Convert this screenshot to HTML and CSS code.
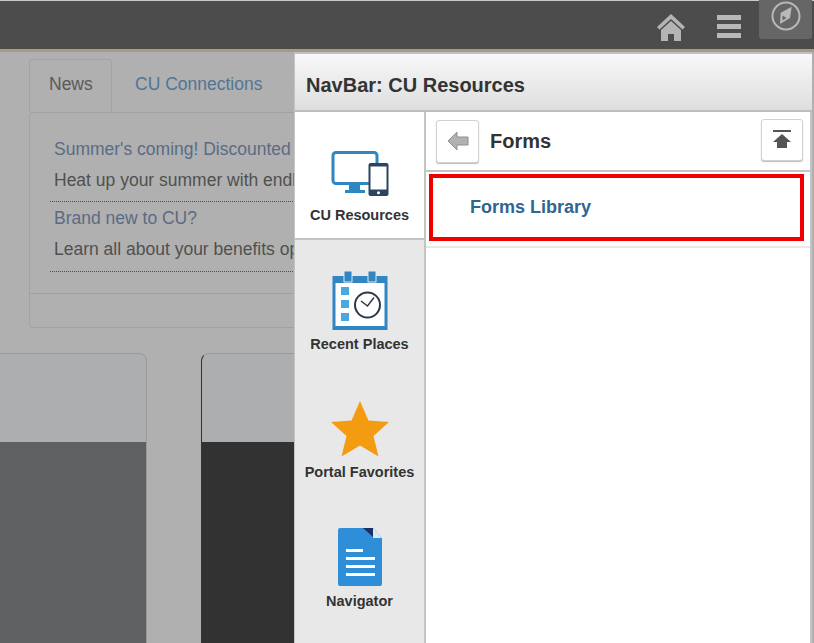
FILE: index.html
```html
<!DOCTYPE html>
<html lang="en">
<head>
    <meta charset="UTF-8">
    <title>NavBar: CU Resources</title>
    <link rel="stylesheet" href="styles.css">
</head>
<body>
    <div class="page">
        <div class="topbar">
            <svg class="home-icon" width="30" height="30" viewBox="0 0 30 30">
                <path d="M1 14 15 1l14 13-2.500 2.500L15 6 3.500 16.500z" fill="#b4b4b4"/>
                <path d="M5 17 15 8l10 9v11h-7v-7h-6v7H5z" fill="#b4b4b4"/>
            </svg>
            <div class="burger"><span></span><span></span><span></span></div>
            <div class="compass-tab">
                <svg width="30" height="30" viewBox="0 0 30 30">
                    <circle cx="15" cy="15" r="13.500" fill="none" stroke="#b8b8b8" stroke-width="2"/>
                    <path d="M20.700 5.700 19 17 9 23 9.700 11.700z" fill="#b8b8b8"/>
                    <path d="M11.500 14.500 15.500 17 11.500 19.500z" fill="#666"/>
                </svg>
            </div>
        </div>

        <div class="content">
            <div class="tabs">
                <div class="tab active">News</div>
                <div class="tab link">CU Connections</div>
            </div>
            <div class="news-box">
                <div class="news-list">
                    <div class="news-item">
                        <div class="news-title">Summer's coming! Discounted</div>
                        <div class="news-text">Heat up your summer with endl</div>
                    </div>
                    <div class="news-item">
                        <div class="news-title">Brand new to CU?</div>
                        <div class="news-text">Learn all about your benefits op</div>
                    </div>
                </div>
                <div class="news-footer"></div>
            </div>
            <div class="tiles">
                <div class="tile tile-left"><div class="tile-top"></div><div class="tile-body"></div></div>
                <div class="tile tile-right"><div class="tile-top"></div><div class="tile-body"></div></div>
            </div>
        </div>

        <div class="navbar">
            <div class="navbar-title">NavBar: CU Resources</div>
            <div class="navbar-main">
                <div class="side">
                    <div class="side-item current">
                        <svg width="58" height="46" viewBox="0 0 58 46">
                            <rect x="2" y="1.500" width="44" height="31" rx="3" fill="none" stroke="#2f86c1" stroke-width="3"/>
                            <path d="M18 33h11v6h5v3H14v-3h4z" fill="#2f86c1"/>
                            <rect x="37.500" y="12" width="20" height="33" rx="2" fill="#2c4461"/>
                            <rect x="39.500" y="15.500" width="16" height="23" fill="#fff"/>
                            <circle cx="47.500" cy="41.700" r="1.500" fill="#fff"/>
                        </svg>
                        <div class="side-label">CU Resources</div>
                    </div>
                    <div class="side-item">
                        <svg width="56" height="60" viewBox="0 0 56 60">
                            <rect x="0.500" y="6" width="55" height="54" fill="#2f86c1"/>
                            <rect x="3.500" y="13" width="49" height="43" fill="#fff"/>
                            <rect x="12" y="1" width="8" height="11" fill="#2f86c1" stroke="#e8e8e8"/>
                            <rect x="36" y="1" width="8" height="11" fill="#2f86c1" stroke="#e8e8e8"/>
                            <rect x="9" y="17" width="8" height="8" fill="#4aa8e0"/>
                            <rect x="9" y="30" width="8" height="8" fill="#4aa8e0"/>
                            <rect x="9" y="43" width="8" height="8" fill="#4aa8e0"/>
                            <circle cx="35.500" cy="35" r="12.500" fill="none" stroke="#2b3a4a" stroke-width="2"/>
                            <path d="M29 31l6.500 5L42 27.500" fill="none" stroke="#2b3a4a" stroke-width="1.500"/>
                        </svg>
                        <div class="side-label">Recent Places</div>
                    </div>
                    <div class="side-item">
                        <svg width="60" height="57" viewBox="0 0 60 57">
                            <path d="M30 1l8.500 19.500L59 22 43.500 36l5 20.500L30 45.500 11.500 56.500l5-20.500L1 22l20.500-1.500z" fill="#f39c12"/>
                        </svg>
                        <div class="side-label">Portal Favorites</div>
                    </div>
                    <div class="side-item">
                        <svg width="46" height="60" viewBox="0 0 46 60">
                            <path d="M3 1h33l9 10v46a2 2 0 0 1-2 2H3a2 2 0 0 1-2-2V3a2 2 0 0 1 2-2z" fill="#2f8ed8"/>
                            <path d="M26 1h10v9z" fill="#1c2f66"/>
                            <path d="M36 1l9 10h-9z" fill="#dce8f2"/>
                            <rect x="9" y="22" width="17" height="3" fill="#fff"/>
                            <rect x="9" y="30" width="29" height="3" fill="#fff"/>
                            <rect x="9" y="38" width="29" height="3" fill="#fff"/>
                            <rect x="9" y="46" width="29" height="3" fill="#fff"/>
                        </svg>
                        <div class="side-label">Navigator</div>
                    </div>
                </div>
                <div class="detail">
                    <div class="detail-head">
                        <div class="btn">
                            <svg width="22" height="20" viewBox="0 0 22 20">
                                <path d="M1 10 10 1v5h11v8H10v5z" fill="#b2b2b2" stroke="#8f8f8f"/>
                            </svg>
                        </div>
                        <div class="detail-title">Forms</div>
                        <div class="btn btn-top">
                            <svg width="18" height="20" viewBox="0 0 18 20">
                                <rect x="0" y="0" width="18" height="2" fill="#555"/>
                                <path d="M9 4 18 12H14v6H4V12H0z" fill="#555"/>
                            </svg>
                        </div>
                    </div>
                    <div class="detail-row">
                        <div class="selected-link">Forms Library</div>
                    </div>
                </div>
            </div>
        </div>
    </div>
</body>
</html>
```

FILE: styles.css
```css
* {
    box-sizing: border-box;
}
body {
    margin: 0;
    font-family: "Liberation Sans", Arial, sans-serif;
    background-color: #b0b0b0;
}
.page {
    position: relative;
    width: 814px;
    height: 643px;
    overflow: hidden;
    background-color: #b0b0b0;
}

/* top bar */
.topbar {
    position: relative;
    display: flex;
    align-items: center;
    justify-content: flex-end;
    height: 52px;
    padding: 5px 73px 0 0;
    background-color: #4c4c4c;
    border-top: 1px solid #c8c8c8;
    border-bottom: 3px solid #a49d85;
}
.home-icon {
    margin-right: 31px;
}
.burger {
    display: flex;
    flex-direction: column;
    gap: 4px;
    width: 24px;
    margin-top: -2px;
}
.burger span {
    height: 5px;
    background-color: #b8b8b8;
}
.compass-tab {
    position: absolute;
    top: -1px;
    right: 2px;
    width: 53px;
    height: 39px;
    display: flex;
    justify-content: center;
    padding-top: 1px;
    background-color: #666;
    border-radius: 0 0 3px 3px;
}

/* page behind the overlay */
.content {
    padding: 7px 0 0 29px;
}
.tabs {
    display: flex;
    height: 53px;
}
.tab {
    padding: 15px 0 0 19px;
    font-size: 17.500px;
}
.tab.active {
    width: 83px;
    padding-top: 14px;
    color: #5a5a5a;
    border: 1px solid #a2a2a2;
    border-bottom: none;
    border-radius: 4px 4px 0 0;
}
.tab.link {
    padding-left: 23px;
    color: #527595;
}
.news-box {
    width: 266px;
    height: 216px;
    overflow: hidden;
    border: 1px solid #a2a2a2;
    border-right: none;
    border-radius: 4px 0 0 4px;
}
.news-list {
    height: 181px;
    padding: 26px 0 0 20px;
    border-bottom: 1px solid #a0a0a0;
}
.news-item {
    padding-left: 4px;
    border-bottom: 1px dotted #4c4c4c;
    white-space: nowrap;
}
.news-item + .news-item {
    padding-top: 6px;
    padding-bottom: 1px;
}
.news-title,
.news-text {
    height: 31px;
    line-height: 20px;
    font-size: 17.500px;
}
.news-title {
    color: #5b6b85;
}
.news-text {
    color: #505050;
}
.tiles {
    display: flex;
    gap: 54px;
    margin: 25px 0 0 -29px;
}
.tile {
    height: 290px;
    width: 147px;
    overflow: hidden;
    background-color: #adaeb0;
    border-top: 1px solid #9a9a9a;
}
.tile-top {
    height: 88px;
}
.tile-body {
    height: 201px;
}
.tile-left {
    border-right: 1px solid #999;
    border-radius: 0 8px 0 0;
}
.tile-left .tile-body {
    background-color: #5f6062;
}
.tile-right {
    width: 94px;
    border-left: 1px solid #333;
    border-radius: 8px 0 0 0;
}
.tile-right .tile-body {
    background-color: #323232;
}

/* navbar overlay */
.navbar {
    position: absolute;
    top: 52px;
    left: 294px;
    right: 2px;
    bottom: 0;
    display: flex;
    flex-direction: column;
    background-color: #fff;
    border-top: 2px solid #bfbfbf;
    border-left: 1px solid #c4c4c4;
}
.navbar-title {
    height: 58px;
    padding: 20px 0 0 11px;
    font-size: 20px;
    font-weight: bold;
    color: #333;
    background: linear-gradient(#f8f8f8, #dedede);
    border-bottom: 2px solid #bdbdbd;
}
.navbar-main {
    flex: 1;
    display: flex;
}
.side {
    width: 131px;
    background-color: #e8e8e8;
    border-right: 2px solid #c4c4c4;
}
.side-item {
    display: flex;
    flex-direction: column;
    align-items: center;
    height: 127px;
    padding-top: 30px;
    gap: 6px;
}
.side-item.current {
    height: 128px;
    padding-top: 39px;
    gap: 10px;
    background-color: #fff;
    border-bottom: 2px solid #c4c4c4;
}
.side-item:nth-child(2) {
    height: 130px;
}
.side-item:nth-child(3) {
    gap: 7px;
}
.side-label {
    font-size: 14.500px;
    font-weight: bold;
    color: #333;
    white-space: nowrap;
}
.detail {
    flex: 1;
    border-right: 2px solid #c4c4c4;
}
.detail-head {
    display: flex;
    align-items: center;
    gap: 11px;
    height: 60px;
    padding: 0 7px 0 10px;
    border-bottom: 2px solid #c4c4c4;
}
.btn {
    display: flex;
    align-items: center;
    justify-content: center;
    width: 43px;
    height: 43px;
    background-color: #fff;
    border: 1px solid #d2d2d2;
    border-radius: 3px;
    box-shadow: 0 1px 1px #bbb;
}
.btn-top {
    width: 42px;
    height: 42px;
    margin-left: auto;
    margin-bottom: 2px;
}
.detail-title {
    font-size: 20px;
    font-weight: bold;
    color: #333;
}
.detail-row {
    height: 76px;
    padding: 2px 6px 0 3px;
    border-bottom: 2px solid #e8e8e8;
}
.selected-link {
    height: 67px;
    padding: 19px 0 0 37px;
    font-size: 18px;
    font-weight: bold;
    color: #2f6591;
    border: 4px solid #ee0000;
}
```
